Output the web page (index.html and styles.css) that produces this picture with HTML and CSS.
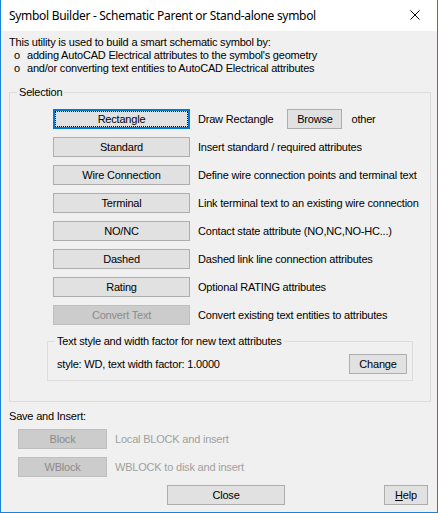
FILE: index.html
```html
<!DOCTYPE html>
<html lang="en">
<head>
  <meta charset="UTF-8" />
  <title>Symbol Builder</title>
  <link rel="stylesheet" href="styles.css">
</head>
<body>

  <div class="dialog">
    <div class="titlebar">
      <span class="title">Symbol Builder - Schematic Parent or Stand-alone symbol</span>
      <button class="close-x" title="Close">
        <svg width="10" height="10" viewBox="0 0 10 10">
          <path d="M0.5 0.5 L9.5 9.5 M9.5 0.5 L0.5 9.5" stroke="#000" stroke-width="1" fill="none"/>
        </svg>
      </button>
    </div>

    <div class="body">
      <div class="intro">
        <div>This utility is used to build a smart schematic symbol by:</div>
        <div class="bullet"><span>o</span>adding AutoCAD Electrical attributes to the symbol's geometry</div>
        <div class="bullet"><span>o</span>and/or converting text entities to AutoCAD Electrical attributes</div>
      </div>

      <div class="group selection">
        <span class="group-title">Selection</span>

        <div class="row">
          <button class="btn wide default">Rectangle</button>
          <span class="desc">Draw Rectangle</span>
          <button class="btn browse">Browse</button>
          <span class="other">other</span>
        </div>
        <div class="row">
          <button class="btn wide">Standard</button>
          <span class="desc">Insert standard / required attributes</span>
        </div>
        <div class="row">
          <button class="btn wide">Wire Connection</button>
          <span class="desc">Define wire connection points and terminal text</span>
        </div>
        <div class="row">
          <button class="btn wide">Terminal</button>
          <span class="desc">Link terminal text to an existing wire connection</span>
        </div>
        <div class="row">
          <button class="btn wide">NO/NC</button>
          <span class="desc">Contact state attribute (NO,NC,NO-HC...)</span>
        </div>
        <div class="row">
          <button class="btn wide">Dashed</button>
          <span class="desc">Dashed link line connection attributes</span>
        </div>
        <div class="row">
          <button class="btn wide">Rating</button>
          <span class="desc">Optional RATING attributes</span>
        </div>
        <div class="row">
          <button class="btn wide" disabled>Convert Text</button>
          <span class="desc">Convert existing text entities to attributes</span>
        </div>

        <div class="group text-style">
          <span class="group-title">Text style and width factor for new text attributes</span>
          <div class="style-row">
            <span>style: WD, text width factor: 1.0000</span>
            <button class="btn change">Change</button>
          </div>
        </div>
      </div>

      <div class="save-label">Save and Insert:</div>
      <div class="save-rows">
        <div class="row">
          <button class="btn block" disabled>Block</button>
          <span class="desc muted">Local BLOCK and insert</span>
        </div>
        <div class="row">
          <button class="btn block" disabled>WBlock</button>
          <span class="desc muted">WBLOCK to disk and insert</span>
        </div>
      </div>

      <div class="footer">
        <button class="btn close">Close</button>
        <button class="btn help"><u>H</u>elp</button>
      </div>
    </div>
  </div>

</body>
</html>
```

FILE: styles.css
```css
* {
  margin: 0;
  padding: 0;
  box-sizing: border-box;
}

body {
  background: #ffffff;
  font-family: 'Liberation Sans', Arial, sans-serif;
  font-size: 11px;
  line-height: 13px;
  letter-spacing: -0.2px;
  color: #000;
}

.dialog {
  width: 438px;
  height: 513px;
  border: 1px solid #1883d7;
  border-top: none;
  display: flex;
  flex-direction: column;
  background: #f0f0f0;
}

/* title bar */
.titlebar {
  height: 31px;
  background: #ffffff;
  display: flex;
  align-items: center;
  padding-left: 8px;
}

.titlebar .title {
  font-family: 'Noto Sans', 'Segoe UI', sans-serif;
  font-size: 12px;
  letter-spacing: -0.3px;
  padding-bottom: 1px;
}

.close-x {
  margin-left: auto;
  width: 46px;
  height: 31px;
  border: none;
  background: transparent;
  display: flex;
  align-items: center;
  justify-content: center;
  padding-left: 2px;
  padding-bottom: 1px;
}

/* dialog body */
.body {
  flex: 1;
  padding: 4px 8px 0 8px;
}

.intro {
  padding-top: 1px;
}

.intro .bullet span {
  display: inline-block;
  width: 13px;
  padding-left: 5px;
  box-sizing: content-box;
}

.group {
  position: relative;
  border: 1px solid #dcdcdc;
}

.group-title {
  position: absolute;
  top: -7px;
  left: 7px;
  padding: 0 2px;
  background: #f0f0f0;
}

.selection {
  margin-top: 17px;
  width: 422px;
  padding: 16px 0 20px 43px;
  display: flex;
  flex-direction: column;
  gap: 8px;
}

.row {
  display: flex;
  align-items: center;
  height: 20px;
}

.btn {
  font-family: 'Liberation Sans', Arial, sans-serif;
  font-size: 11px;
  letter-spacing: -0.2px;
  color: #000;
  height: 20px;
  background: #e1e1e1;
  border: 1px solid #adadad;
  padding-bottom: 1px;
}

.btn.wide {
  width: 137px;
}

.btn.default {
  border: 2px solid #0078d7;
  outline: 1px dotted #000;
  outline-offset: -3px;
}

.btn:disabled {
  background: #cccccc;
  border-color: #bfbfbf;
  color: #8b8b8b;
}

.desc {
  margin-left: 8px;
}

.desc.muted {
  color: #a0a0a0;
}

.btn.browse {
  width: 55px;
  margin-left: 14px;
}

.other {
  margin-left: 9px;
}

/* nested group with the text style */
.text-style {
  margin-top: 8px;
  margin-left: -6px;
  width: 366px;
  padding: 12px 5px 6px 9px;
}

.style-row {
  display: flex;
  align-items: center;
  justify-content: space-between;
}

.btn.change {
  width: 58px;
}

.save-label {
  margin-top: 8px;
}

.save-rows {
  margin-top: 6px;
  padding-left: 9px;
  display: flex;
  flex-direction: column;
  gap: 8px;
}

.btn.block {
  width: 89px;
}

.footer {
  margin-top: 8px;
  height: 20px;
  display: flex;
  align-items: center;
}

.btn.close {
  width: 118px;
  margin-left: 158px;
}

.btn.help {
  width: 44px;
  margin-left: auto;
  margin-right: 1px;
}
```
